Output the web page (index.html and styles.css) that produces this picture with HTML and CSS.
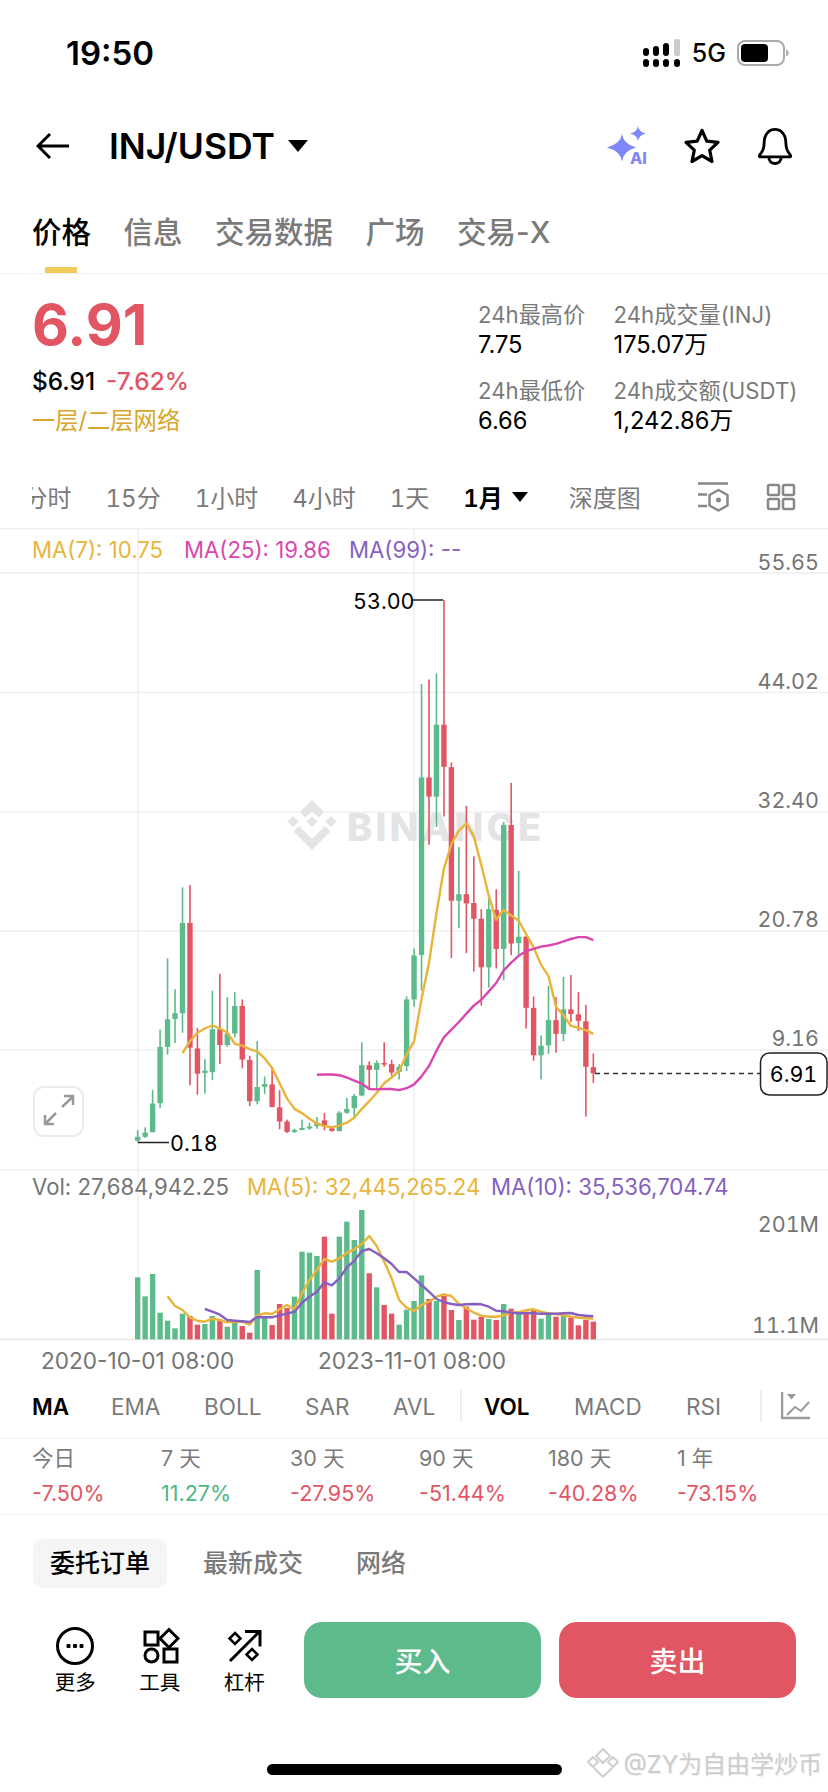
FILE: index.html
```html
<!DOCTYPE html>
<html lang="zh-CN">
<head>
    <meta charset="UTF-8">
    <meta name="viewport" content="width=device-width, initial-scale=1.0">
    <title>INJ/USDT</title>
    <link rel="stylesheet" href="styles.css">
</head>
<body>
    <div class="status-bar">
        <span class="clock">19:50</span>
        <div class="status-icons">
            <svg class="signal" width="38" height="28" viewBox="0 0 38 28">
                <rect x="0" y="9" width="6" height="8" rx="3"/>
                <rect x="10" y="7" width="6" height="10" rx="3"/>
                <rect x="20" y="4" width="6" height="13" rx="3"/>
                <rect class="signal-off" x="31" y="0" width="6" height="17" rx="2"/>
                <rect x="0" y="20" width="6" height="8" rx="3"/>
                <rect x="10" y="20" width="6" height="8" rx="3"/>
                <rect x="20" y="20" width="6" height="8" rx="3"/>
                <rect x="31" y="20" width="6" height="8" rx="3"/>
            </svg>
            <span class="network">5G</span>
            <svg width="52" height="26" viewBox="0 0 52 26">
                <rect x="1" y="1" width="46" height="24" rx="7" fill="none" stroke="#aaa" stroke-width="2"/>
                <rect x="4" y="4" width="27" height="18" rx="4" fill="#000"/>
                <path d="M49 9.500c2 .8 2.600 2 2.600 3.500s-.6 2.700-2.600 3.500z" fill="#aaa"/>
            </svg>
        </div>
    </div>

    <div class="nav">
        <svg class="back" width="34" height="28" viewBox="0 0 34 28">
            <path d="M33 14H2M14 2 2 14l12 12" fill="none" stroke="#000" stroke-width="3"/>
        </svg>
        <h1 class="pair">INJ/USDT</h1>
        <span class="caret caret-big"></span>
        <div class="nav-icons">
            <svg width="44" height="40" viewBox="0 0 44 40">
                <path class="sparkle" d="M15 8q1.500 10 14 13.500q-12.500 3.500-14 14q-1.500-10.500-15-14q13.500-3.500 15-13.500z"/>
                <path class="sparkle" d="M31 0q.8 6 8 7.500q-7.200 1.500-8 7.500q-.8-6-8-7.500q7.200-1.500 8-7.500z"/>
                <text class="ai-mark" x="23" y="38">AI</text>
            </svg>
            <svg class="star" width="38" height="38" viewBox="0 0 38 38">
                <path d="M19 3.500l4.800 10.600 11.200 1.300-8.300 7.700 2.300 11.400-10-5.800-10 5.800 2.300-11.400-8.300-7.700 11.200-1.300z" fill="none" stroke="#000" stroke-width="3.200" stroke-linejoin="round"/>
            </svg>
            <svg width="36" height="38" viewBox="0 0 38 40">
                <path d="M2.500 30.500c0-2 5-4 5-13.500 0-9 5-14.500 11.500-14.500s11.500 5.500 11.500 14.500c0 9.500 5 11.500 5 13.500 0 .8-.6 1-1.500 1h-30c-.9 0-1.500-.2-1.500-1z" fill="none" stroke="#000" stroke-width="3" stroke-linejoin="round"/>
                <path d="M12.500 32c0 4 3 6.500 6.500 6.500s6.500-2.500 6.500-6.500" fill="none" stroke="#000" stroke-width="3"/>
            </svg>
        </div>
    </div>

    <div class="tabs">
        <div class="tab active">价格</div>
        <div class="tab">信息</div>
        <div class="tab">交易数据</div>
        <div class="tab">广场</div>
        <div class="tab">交易-X</div>
    </div>

    <div class="stats">
        <div class="stats-left">
            <div class="price">6.91</div>
            <div class="price-sub">$6.91<span class="down">-7.62%</span></div>
            <div class="price-tag">一层/二层网络</div>
        </div>
        <div class="stats-right">
            <div><div class="stat-label">24h最高价</div><div class="stat-value">7.75</div></div>
            <div><div class="stat-label">24h成交量(INJ)</div><div class="stat-value">175.07万</div></div>
            <div><div class="stat-label">24h最低价</div><div class="stat-value">6.66</div></div>
            <div><div class="stat-label">24h成交额(USDT)</div><div class="stat-value">1,242.86万</div></div>
        </div>
    </div>

    <div class="periods">
        <div class="period-list">
            <span class="period first">分时</span>
            <span class="period">15分</span>
            <span class="period">1小时</span>
            <span class="period">4小时</span>
            <span class="period">1天</span>
            <span class="period current">1月<i class="caret"></i></span>
            <span class="period depth">深度图</span>
        </div>
        <svg class="period-tool" width="32" height="30" viewBox="698 484 32 30" fill="none" stroke="#888" stroke-width="2.500">
            <path d="M698 485.500h30M698 496.500h9M698 508h9"/>
            <path d="M718.500 492l9 5v10.500l-9 5-9-5V497z" stroke-linejoin="round"/>
            <circle cx="718.500" cy="502" r="2.500" fill="#888" stroke="none"/>
        </svg>
        <svg class="period-tool" width="30" height="28" viewBox="0 0 30 28" fill="none" stroke="#888" stroke-width="2.500">
            <rect x="2" y="2" width="11" height="10" rx="1.500"/>
            <rect x="17" y="2" width="11" height="10" rx="1.500"/>
            <rect x="2" y="16" width="11" height="10" rx="1.500"/>
            <rect x="17" y="16" width="11" height="10" rx="1.500"/>
        </svg>
    </div>

    <!-- viewBox keeps page coordinates so the chart numbers line up with the screenshot -->
    <svg class="chart" width="828" height="846" viewBox="0 528 828 846">
        <g class="grid">
            <path d="M0 528.500H828M0 573H828M0 692.500H828M0 812H828M0 931H828M0 1050H828M0 1170H828"/>
            <path d="M138 528V1339M414 528V1339"/>
            <path class="baseline" d="M0 1339.500H828"/>
        </g>

        <g class="watermark">
            <path d="M312 800l12 12-5.500 5.500-6.500-6.500-6.500 6.500-5.500-5.500zM293 816l5.500 5.500-5.500 5.500-5.500-5.500zM331 816l5.500 5.500-5.500 5.500-5.500-5.500zM312 816l5.500 5.500-5.500 5.500-5.500-5.500zM299 826l13 13 13-13 5.500 5.500-18.500 18.500-18.500-18.500z"/>
            <text x="347" y="841">BINANCE</text>
        </g>

        <g id="candles"></g>
        <g id="price-lines" fill="none" stroke-width="2.400" stroke-linejoin="round"></g>
        <g id="volumes"></g>
        <g id="volume-lines" fill="none" stroke-width="2.400" stroke-linejoin="round"></g>

        <text class="legend" y="549"><tspan class="ma7" x="32">MA(7): 10.75</tspan><tspan class="ma25" x="184">MA(25): 19.86</tspan><tspan class="ma99" x="349">MA(99): --</tspan></text>

        <text class="axis" x="819" y="562">55.65</text>
        <text class="axis" x="819" y="681">44.02</text>
        <text class="axis" x="819" y="800">32.40</text>
        <text class="axis" x="819" y="919">20.78</text>
        <text class="axis" x="819" y="1038">9.16</text>
        <text class="axis" x="819" y="1224">201M</text>
        <text class="axis" x="819" y="1325">11.1M</text>

        <path class="marker" d="M412 600H443M138 1142.500H169"/>
        <text class="mark-text" x="353" y="601">53.00</text>
        <text class="mark-text" x="170" y="1143">0.18</text>

        <path class="last-line" d="M595 1073.500H760"/>
        <rect class="last-box" x="760.500" y="1053" width="66.500" height="42" rx="9"/>
        <text class="mark-text last-text" x="793.500" y="1074">6.91</text>

        <g class="expand">
            <rect class="expand-box" x="34" y="1087" width="49" height="49" rx="10"/>
            <path d="M62 1107l10.500-10M64 1096h9v9M56 1113l-10.500 10.500M45 1115v9h9"/>
        </g>

        <text class="legend vol-legend" y="1186"><tspan class="vol" x="32">Vol: 27,684,942.25</tspan><tspan class="ma7" x="247">MA(5): 32,445,265.24</tspan><tspan class="ma99" x="491">MA(10): 35,536,704.74</tspan></text>

        <text class="date" x="41" y="1360">2020-10-01 08:00</text>
        <text class="date" x="318" y="1360">2023-11-01 08:00</text>
    </svg>

    <div class="indicators">
        <span class="ind on ind-ma">MA</span>
        <span class="ind ind-ema">EMA</span>
        <span class="ind ind-boll">BOLL</span>
        <span class="ind ind-sar">SAR</span>
        <span class="ind ind-avl">AVL</span>
        <span class="ind-sep"></span>
        <span class="ind on ind-vol">VOL</span>
        <span class="ind ind-macd">MACD</span>
        <span class="ind ind-rsi">RSI</span>
        <span class="ind-sep sep-last"></span>
        <svg class="ind-chart" width="30" height="28" viewBox="779 1391 30 28" fill="none" stroke="#999" stroke-width="2">
            <path d="M780 1391v26h28" stroke-width="2.500"/>
            <path d="M785 1414l8-8 6 4 8-9"/>
            <path d="M785 1393h9l-4.500 5.500z" fill="#999" stroke="none"/>
        </svg>
    </div>

    <div class="returns">
        <div class="ret"><div class="ret-label">今日</div><div class="ret-value down">-7.50%</div></div>
        <div class="ret"><div class="ret-label">7 天</div><div class="ret-value up">11.27%</div></div>
        <div class="ret"><div class="ret-label">30 天</div><div class="ret-value down">-27.95%</div></div>
        <div class="ret"><div class="ret-label">90 天</div><div class="ret-value down">-51.44%</div></div>
        <div class="ret"><div class="ret-label">180 天</div><div class="ret-value down">-40.28%</div></div>
        <div class="ret"><div class="ret-label">1 年</div><div class="ret-value down">-73.15%</div></div>
    </div>

    <div class="order-tabs">
        <span class="order-tab selected">委托订单</span>
        <span class="order-tab">最新成交</span>
        <span class="order-tab">网络</span>
    </div>

    <div class="actions">
        <div class="tool">
            <svg width="40" height="40" viewBox="0 0 40 40">
                <circle cx="20" cy="20" r="17.500" fill="none" stroke="#000" stroke-width="3"/>
                <rect x="11.500" y="18" width="4" height="4" rx="1"/>
                <rect x="18" y="18" width="4" height="4" rx="1"/>
                <rect x="24.500" y="18" width="4" height="4" rx="1"/>
            </svg>
            <span>更多</span>
        </div>
        <div class="tool">
            <svg width="40" height="40" viewBox="139 1625 40 40" fill="none" stroke="#000" stroke-width="3">
                <rect x="144" y="1631" width="13" height="13"/>
                <path d="M168 1628.500l9 9-9 9-9-9z"/>
                <circle cx="150.500" cy="1654.500" r="6.500"/>
                <rect x="163" y="1648" width="13" height="13"/>
            </svg>
            <span>工具</span>
        </div>
        <div class="tool">
            <svg width="40" height="40" viewBox="224 1625 40 40" fill="none" stroke="#000" stroke-width="3">
                <path d="M230 1660l29-29M245 1630.500h15v15"/>
                <path d="M235 1632l5.500 5.500-5.500 5.500-5.500-5.500zM252 1648l5.500 5.500-5.500 5.500-5.500-5.500z" stroke-width="2.500"/>
            </svg>
            <span>杠杆</span>
        </div>
        <button class="trade buy">买入</button>
        <button class="trade sell">卖出</button>
    </div>

    <div class="home-bar"></div>

    <div class="credit">
        <svg width="34" height="30" viewBox="0 0 34 30" fill="none" stroke="#cfcfcf" stroke-width="2">
            <path d="M17 1l7 7-7 7-7-7zM7 9l5 5-5 5-5-5zM27 9l5 5-5 5-5-5zM17 29L8 20M17 29l9-9"/>
        </svg>
        <span>@ZY为自由学炒币</span>
    </div>

    <script src="chart.js"></script>
</body>
</html>
```

FILE: styles.css
```css
* {
    box-sizing: border-box;
}
body {
    position: relative;
    width: 828px;
    height: 1792px;
    margin: 0;
    overflow: hidden;
    background: #fff;
    color: #000;
    font-family: Inter, "Noto Sans CJK SC", sans-serif;
}
svg {
    display: block;
    flex: none;
}

/* status bar */
.status-bar {
    display: flex;
    align-items: center;
    justify-content: space-between;
    height: 106px;
    padding: 0 39px 0 66px;
}
.clock {
    font-size: 33px;
    font-weight: 600;
}
.status-icons {
    display: flex;
    align-items: center;
    gap: 11px;
}
.signal {
    fill: #000;
}
.signal-off {
    fill: #ccc;
}
.network {
    font-size: 25px;
    font-weight: 500;
}

/* nav */
.nav {
    display: flex;
    align-items: center;
    height: 80px;
    padding: 0 35px 0 36px;
}
.back {
    margin-right: 39px;
}
.pair {
    margin: 0 13px 0 0;
    font-size: 35.500px;
    font-weight: 600;
}
.caret {
    display: inline-block;
    width: 0;
    height: 0;
    border-left: 8px solid transparent;
    border-right: 8px solid transparent;
    border-top: 10px solid #000;
}
.caret-big {
    border-left-width: 10px;
    border-right-width: 10px;
    border-top-width: 12px;
}
.nav-icons {
    display: flex;
    align-items: center;
    gap: 34px;
    margin-left: auto;
}
.star {
    margin: 0 2px 0 -2px;
}
.sparkle {
    fill: #7f86f8;
}
.ai-mark {
    fill: #7f86f8;
    font-size: 16px;
    font-weight: 800;
}

/* tabs */
.tabs {
    display: flex;
    gap: 32.500px;
    height: 88px;
    padding: 29px 0 0 32px;
    border-bottom: 1.5px solid #f0f0f2;
}
.tab {
    position: relative;
    height: 58px;
    color: #7a7a7a;
    font-size: 29.500px;
    line-height: 34px;
    font-weight: 500;
}
.tab.active {
    color: #000;
}
.tab.active::after {
    content: "";
    position: absolute;
    left: 13px;
    bottom: 0;
    width: 32px;
    height: 6px;
    background: #f0cb58;
}

/* price block */
.stats {
    display: flex;
    height: 188px;
    padding: 20px 0 0 32px;
}
.stats-left {
    width: 446px;
}
.price {
    height: 60px;
    margin-bottom: 11px;
    color: #e25563;
    font-size: 57px;
    line-height: 62px;
    font-weight: 700;
}
.price-sub {
    height: 30px;
    margin-bottom: 11px;
    font-size: 24.400px;
    line-height: 32px;
    font-weight: 500;
}
.price-sub .down {
    margin-left: 11px;
}
.price-tag {
    color: #d9a52a;
    font-size: 23.300px;
    line-height: 30px;
}
.down {
    color: #e25563;
}
.up {
    color: #4cb884;
}
.stats-right {
    display: grid;
    grid-template-columns: 135.500px auto;
    row-gap: 16px;
    align-content: start;
    padding-top: 6px;
}
.stat-label {
    color: #7a7a7a;
    font-size: 22.200px;
    line-height: 30px;
    white-space: nowrap;
}
.stat-value {
    font-size: 23.700px;
    line-height: 30px;
    white-space: nowrap;
}

/* periods */
.periods {
    display: flex;
    align-items: center;
    height: 66px;
    padding: 3px 32px 0 32px;
}
.period-list {
    display: flex;
    align-items: center;
    flex: 1;
    gap: 34px;
    overflow: hidden;
    color: #7a7a7a;
    font-size: 24px;
    font-variant-numeric: tabular-nums;
}
.period {
    flex: none;
}
.period.first {
    margin-left: -8.500px;
}
.period.current {
    display: flex;
    align-items: center;
    gap: 9px;
    color: #000;
    font-weight: 600;
}
.period.depth {
    margin-left: 7px;
}
.period-tool {
    margin-left: 36px;
}

/* chart */
.chart text {
    font-family: Inter, "Noto Sans CJK SC", sans-serif;
    dominant-baseline: central;
}
.grid {
    fill: none;
    stroke: #f0f0f2;
    stroke-width: 1.5;
}
.baseline {
    stroke: #e8e8ea;
}
.watermark {
    fill: #e4e4e6;
}
.chart .watermark text {
    dominant-baseline: auto;
    font-size: 38px;
    font-weight: 800;
    letter-spacing: 3.200px;
}
.legend {
    font-size: 22.200px;
}
.ma7 {
    fill: #e9b43a;
}
.ma25 {
    fill: #d946b0;
}
.ma99 {
    fill: #8560c0;
}
.vol {
    fill: #747474;
}
.axis {
    fill: #747474;
    font-size: 21.500px;
    font-variant-numeric: tabular-nums;
    text-anchor: end;
}
.date {
    fill: #747474;
    font-size: 22.600px;
}
.marker {
    fill: none;
    stroke: #222;
    stroke-width: 1.5;
}
.mark-text {
    fill: #000;
    font-size: 21.500px;
    font-variant-numeric: tabular-nums;
}
.last-line {
    fill: none;
    stroke: #333;
    stroke-width: 1.500;
    stroke-dasharray: 5 4;
}
.last-box {
    fill: #fff;
    stroke: #222;
    stroke-width: 1.500;
}
.last-text {
    text-anchor: middle;
}
.expand {
    fill: none;
    stroke: #999;
    stroke-width: 2.500;
}
.expand-box {
    fill: #fff;
    stroke: #ececee;
    stroke-width: 2;
}

/* indicator switch */
.indicators {
    position: relative;
    display: flex;
    align-items: center;
    height: 65px;
    padding-left: 32px;
    border-bottom: 1.5px solid #f0f0f2;
    color: #7a7a7a;
    font-size: 22.500px;
}
.ind {
    flex: none;
}
.ind.on {
    color: #000;
    font-weight: 600;
}
.ind-ma { width: 79px; }
.ind-ema { width: 93px; }
.ind-boll { width: 101px; }
.ind-sar { width: 88px; }
.ind-avl { width: 67px; }
.ind-vol { width: 90px; }
.ind-macd { width: 112px; }
.ind-rsi { width: 74px; }
.ind-sep {
    flex: none;
    width: 2px;
    height: 32px;
    margin-right: 22px;
    background: #eeeef0;
}
.sep-last {
    margin-right: 19px;
}

/* returns row */
.returns {
    display: flex;
    height: 76px;
    padding: 4px 0 0 32px;
    border-bottom: 1.5px solid #f0f0f2;
}
.ret {
    width: 129px;
    white-space: nowrap;
}
.ret-label {
    color: #7a7a7a;
    font-size: 21.500px;
    line-height: 30px;
}
.ret-value {
    margin-top: 5px;
    font-size: 21.500px;
    line-height: 30px;
}

/* order tabs */
.order-tabs {
    display: flex;
    align-items: center;
    height: 49px;
    margin-top: 24px;
    padding-left: 33px;
    color: #7a7a7a;
    font-size: 25px;
    font-weight: 500;
}
.order-tab {
    padding: 0 17px;
    margin-right: 19px;
    line-height: 49px;
}
.order-tab.selected {
    border-radius: 10px;
    background: #f5f5f5;
    color: #000;
}

/* actions */
.actions {
    display: flex;
    align-items: center;
    height: 76px;
    margin-top: 34px;
    padding-left: 33px;
}
.tool {
    display: flex;
    flex-direction: column;
    align-items: center;
    gap: 3px;
    width: 84.500px;
    padding-top: 2px;
    font-size: 20.500px;
    line-height: 28px;
}
.trade {
    width: 237px;
    height: 76px;
    margin-left: 18px;
    padding: 0;
    border: 0;
    border-radius: 18px;
    color: #fff;
    font-family: inherit;
    font-size: 28px;
    font-weight: 500;
}
.tool + .trade {
    margin-left: 17.500px;
}
.buy {
    background: #5dba8a;
}
.sell {
    background: #e25563;
}

/* home indicator */
.home-bar {
    width: 295px;
    height: 11px;
    margin: 66px 0 0 267px;
    border-radius: 6px;
    background: #000;
}
.credit {
    position: absolute;
    right: 6px;
    bottom: 12px;
    display: flex;
    align-items: center;
    gap: 3px;
    color: #cdcdcd;
    font-size: 24px;
    text-shadow: 1px 1px 0 #eee;
}
```

FILE: chart.js
```js
// monthly candles, read off the chart: [up?, high, open/top, close/bottom, low]
// y values are in units of 1/2.613 px measured from y=580
const candles = [
    [1,1437,1455,1465,1470],[1,1430,1444,1455,1458],[1,1332,1368,1443,1443],[1,1175,1220,1367,1380],
    [1,989,1148,1220,1240],[1,1069,1132,1147,1210],[1,803,896,1132,1183],[0,797,896,1222,1320],
    [0,1170,1224,1290,1345],[1,1252,1282,1288,1342],[1,1073,1174,1286,1307],[0,1029,1174,1215,1265],
    [1,1090,1185,1215,1220],[1,1077,1113,1185,1195],[0,1096,1113,1253,1276],[0,1243,1254,1362,1375],
    [1,1205,1325,1362,1370],[1,1297,1317,1324,1343],[0,1275,1318,1377,1378],[0,1333,1378,1415,1435],
    [0,1410,1415,1442,1445],[1,1434,1437,1442,1445],[1,1410,1432,1437,1438],[1,1418,1428,1433,1437],
    [1,1403,1418,1427,1434],[0,1393,1412,1425,1438],[0,1430,1433,1440,1441],[1,1388,1392,1440,1441],
    [1,1353,1382,1392,1395],[1,1343,1348,1380,1408],[1,1208,1268,1347,1349],[0,1258,1268,1280,1330],
    [1,1255,1262,1280,1330],[0,1208,1262,1266,1272],[0,1253,1265,1287,1295],[1,1265,1272,1285,1305],
    [1,1088,1096,1270,1283],[1,963,981,1096,1115],[1,272,516,980,1073],[0,260,516,566,692],
    [1,244,378,566,645],[0,52,378,488,618],[0,477,489,838,988],[1,698,821,838,910],
    [0,590,821,845,975],[0,722,844,885,1023],[0,860,885,1012,1112],[1,832,860,1012,1065],
    [0,808,862,964,1015],[1,632,640,964,1046],[0,530,640,950,980],[1,760,932,949,980],
    [0,930,932,1118,1172],[0,1088,1118,1242,1256],[1,1190,1217,1242,1305],[1,1060,1150,1216,1238],
    [0,1090,1150,1186,1235],[1,1037,1122,1186,1205],[0,1032,1122,1134,1155],[0,1077,1135,1152,1178],
    [0,1110,1153,1272,1402],[0,1237,1273,1289,1314]
];

// volume bar tops, 1/3 px from y=1170
const volumes = [322,379,312,428,452,475,431,438,464,462,438,452,470,455,468,488,300,440,465,402,414,380,245,248,258,200,431,200,155,210,120,310,352,405,431,464,419,393,316,387,393,378,420,450,410,449,440,447,450,402,416,430,425,420,446,430,440,437,443,466,449,455];

// moving averages as index -> y, same units as above
const ma7 = [[6,1236],[7,1205],[8,1183],[9,1172],[10,1164],[11,1172],[12,1182],[13,1212],[14,1217],[15,1226],[16,1232],[17,1250],[18,1275],[19,1315],[20,1355],[21,1382],[22,1393],[23,1408],[24,1420],[25,1427],[26,1430],[27,1425],[28,1418],[29,1405],[30,1382],[31,1362],[32,1340],[33,1315],[34,1300],[35,1283],[36,1240],[37,1205],[38,1095],[39,1000],[40,870],[41,755],[42,690],[43,655],[44,636],[45,670],[46,745],[47,825],[48,888],[49,862],[50,877],[51,890],[52,925],[53,960],[54,1005],[55,1035],[56,1115],[57,1138],[58,1165],[59,1170],[60,1176],[61,1186]];
const ma25 = [[24,1293],[25,1292],[26,1292],[27,1294],[28,1300],[29,1308],[30,1316],[31,1330],[32,1331],[33,1330],[34,1330],[35,1333],[36,1328],[37,1318],[38,1297],[39,1270],[40,1230],[41,1195],[42,1175],[43,1155],[44,1133],[45,1112],[46,1097],[47,1075],[48,1053],[49,1020],[50,1000],[51,982],[52,970],[53,964],[54,958],[55,955],[56,951],[57,944],[58,938],[59,933],[60,933],[61,941]];
const vma5 = [[4,379],[5,408],[6,420],[7,443],[8,452],[9,455],[10,446],[11,450],[12,457],[13,455],[14,455],[15,464],[16,436],[17,430],[18,432],[19,418],[20,405],[21,418],[22,370],[23,330],[24,300],[25,267],[26,275],[27,265],[28,248],[29,238],[30,222],[31,198],[32,228],[33,275],[34,325],[35,390],[36,413],[37,423],[38,405],[39,395],[40,380],[41,373],[42,378],[43,402],[44,415],[45,428],[46,437],[47,440],[48,440],[49,436],[50,428],[51,426],[52,421],[53,418],[54,425],[55,430],[56,432],[57,436],[58,440],[59,443],[60,444],[61,446]];
const vma10 = [[9,417],[10,425],[11,434],[12,450],[13,452],[14,454],[15,456],[16,441],[17,442],[18,442],[19,436],[20,431],[21,425],[22,398],[23,380],[24,365],[25,337],[26,346],[27,325],[28,293],[29,272],[30,243],[31,237],[32,250],[33,265],[34,282],[35,306],[36,306],[37,325],[38,345],[39,365],[40,387],[41,396],[42,402],[43,405],[44,403],[45,402],[46,403],[47,410],[48,422],[49,424],[50,428],[51,430],[52,430],[53,430],[54,431],[55,431],[56,431],[57,430],[58,429],[59,435],[60,437],[61,439]];

const GREEN = '#5dba8a';
const RED = '#e25563';
const BAR = 5.4;

const xAt = i => 137.67 + i * 7.47;
const priceY = y => 580 + y / 2.613;
const volY = y => 1170 + y / 3;

function drawCandles() {
    let out = '';
    candles.forEach((c, i) => {
        const x = xAt(i);
        const color = c[0] ? GREEN : RED;
        out += `<rect x="${x - 0.8}" y="${priceY(c[1])}" width="1.6" height="${(c[4] - c[1]) / 2.613}" fill="${color}"/>`;
        out += `<rect x="${x - BAR / 2}" y="${priceY(c[2])}" width="${BAR}" height="${Math.max((c[3] - c[2]) / 2.613, 1.5)}" fill="${color}"/>`;
    });
    document.getElementById('candles').innerHTML = out;
}

function drawVolumes() {
    let out = '';
    volumes.forEach((top, i) => {
        const color = candles[i][0] ? GREEN : RED;
        out += `<rect x="${xAt(i) - BAR / 2}" y="${volY(top)}" width="${BAR}" height="${(508 - top) / 3}" fill="${color}"/>`;
    });
    document.getElementById('volumes').innerHTML = out;
}

function line(points, toY, color) {
    const d = points.map(p => `${xAt(p[0]).toFixed(1)},${toY(p[1]).toFixed(1)}`).join(' ');
    return `<polyline points="${d}" stroke="${color}"/>`;
}

drawCandles();
drawVolumes();
document.getElementById('price-lines').innerHTML = line(ma7, priceY, '#e9b43a') + line(ma25, priceY, '#d946b0');
document.getElementById('volume-lines').innerHTML = line(vma5, volY, '#e9b43a') + line(vma10, volY, '#8560c0');
```
